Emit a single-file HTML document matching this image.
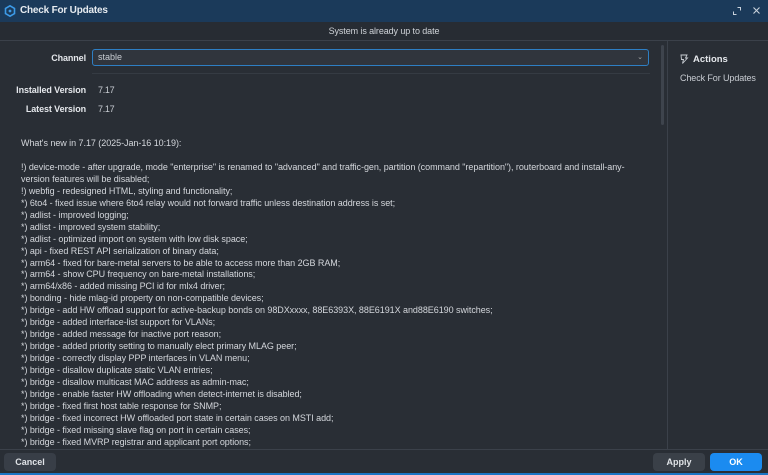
<!DOCTYPE html>
<html><head><meta charset="utf-8"><style>
*{margin:0;padding:0;box-sizing:border-box}
body{width:768px;height:475px;overflow:hidden;background:#292e35;font-family:"Liberation Sans",sans-serif;color:#d4d7dc;position:relative}
.title{position:absolute;left:0;top:0;width:768px;height:22px;background:#1b3a5a;}
.title .t{position:absolute;left:20px;top:5px;font-size:10px;font-weight:bold;color:#e6ebf0;letter-spacing:-0.2px}
.sub{position:absolute;left:0;top:22px;width:768px;height:19px;border-bottom:1px solid #3b414a;background:#272c33;text-align:center;font-size:9px;line-height:19px;color:#cfd3d8;letter-spacing:-0.1px}
.lbl{position:absolute;font-size:9px;font-weight:bold;color:#e4e7eb;text-align:right;width:86px;left:0;letter-spacing:-0.1px}
.val{position:absolute;left:98px;font-size:9px;color:#c8ccd2;letter-spacing:-0.3px}
.sel{position:absolute;left:92px;top:49px;width:557px;height:17px;border:1px solid #2e7fc4;border-radius:3px;background:#30353d;font-size:9px;line-height:15px;padding-left:5px;color:#c8ccd2}
.hr{position:absolute;left:92px;top:73px;width:558px;height:1px;background:#353b43}
.scroll{position:absolute;left:661px;top:45px;width:3px;height:80px;background:#3e444d;border-radius:2px}
.rp{position:absolute;left:667px;top:41px;width:1px;height:408px;background:#3b414a}
.notes{position:absolute;left:21px;top:138px;font-size:9px;line-height:11.96px;color:#d4d7dc;letter-spacing:-0.05px;white-space:nowrap}
.foot{position:absolute;left:0;top:449px;width:768px;height:26px;border-top:1px solid #3b414a;background:#292e35}
.btn{position:absolute;top:453px;height:18px;border-radius:4px;font-size:9px;font-weight:bold;text-align:center;line-height:18px}
.bl{position:absolute;left:0;top:473px;width:768px;height:2px;background:#1b75c4}
</style></head><body>
<div class="title">
<svg style="position:absolute;left:4px;top:5px" width="12" height="12" viewBox="0 0 12 12"><path d="M6 0.8 L10.5 3.4 L10.5 8.6 L6 11.2 L1.5 8.6 L1.5 3.4 Z" fill="none" stroke="#3d9be8" stroke-width="1.6"/><circle cx="6" cy="6" r="1.4" fill="#3d9be8"/></svg>
<div class="t">Check For Updates</div>
<svg style="position:absolute;left:733px;top:7px" width="8" height="8" viewBox="0 0 8 8"><path d="M4.5 0.5H7.5V3.5M3.5 7.5H0.5V4.5" fill="none" stroke="#c9d2dc" stroke-width="1"/></svg>
<svg style="position:absolute;left:753px;top:7px" width="7" height="7" viewBox="0 0 7 7"><path d="M0.5 0.5L6.5 6.5M6.5 0.5L0.5 6.5" stroke="#c9d2dc" stroke-width="1.1"/></svg>
</div>
<div class="sub">System is already up to date</div>
<div class="lbl" style="top:53px">Channel</div>
<div class="sel">stable<span style="position:absolute;right:5px;top:0;font-size:7px;color:#aaa">&#8964;</span></div>
<div class="hr"></div>
<div class="lbl" style="top:85px">Installed Version</div><div class="val" style="top:85px">7.17</div>
<div class="lbl" style="top:104px">Latest Version</div><div class="val" style="top:104px">7.17</div>
<div class="scroll"></div>
<div class="rp"></div>
<svg style="position:absolute;left:679px;top:54px" width="10" height="10" viewBox="0 0 10 10"><path d="M2 1H8L6.5 4H8.5L3.5 9.5L4.5 5.5H2.5Z" fill="none" stroke="#c9ced4" stroke-width="0.9"/></svg>
<div style="position:absolute;left:693px;top:54px;font-size:9.5px;font-weight:bold;color:#e4e7eb">Actions</div>
<div style="position:absolute;left:680px;top:73px;font-size:9px;color:#c8ccd2;letter-spacing:-0.1px">Check For Updates</div>
<div class="notes">What's new in 7.17 (2025-Jan-16 10:19):<br><br>
!) device-mode - after upgrade, mode "enterprise" is renamed to "advanced" and traffic-gen, partition (command "repartition"), routerboard and install-any-<br>
version features will be disabled;<br>
!) webfig - redesigned HTML, styling and functionality;<br>
*) 6to4 - fixed issue where 6to4 relay would not forward traffic unless destination address is set;<br>
*) adlist - improved logging;<br>
*) adlist - improved system stability;<br>
*) adlist - optimized import on system with low disk space;<br>
*) api - fixed REST API serialization of binary data;<br>
*) arm64 - fixed for bare-metal servers to be able to access more than 2GB RAM;<br>
*) arm64 - show CPU frequency on bare-metal installations;<br>
*) arm64/x86 - added missing PCI id for mlx4 driver;<br>
*) bonding - hide mlag-id property on non-compatible devices;<br>
*) bridge - add HW offload support for active-backup bonds on 98DXxxxx, 88E6393X, 88E6191X and88E6190 switches;<br>
*) bridge - added interface-list support for VLANs;<br>
*) bridge - added message for inactive port reason;<br>
*) bridge - added priority setting to manually elect primary MLAG peer;<br>
*) bridge - correctly display PPP interfaces in VLAN menu;<br>
*) bridge - disallow duplicate static VLAN entries;<br>
*) bridge - disallow multicast MAC address as admin-mac;<br>
*) bridge - enable faster HW offloading when detect-internet is disabled;<br>
*) bridge - fixed first host table response for SNMP;<br>
*) bridge - fixed incorrect HW offloaded port state in certain cases on MSTI add;<br>
*) bridge - fixed missing slave flag on port in certain cases;<br>
*) bridge - fixed MVRP registrar and applicant port options;</div>
<div class="foot"></div>
<div class="btn" style="left:4px;width:52px;background:#383e47;color:#e0e3e7">Cancel</div>
<div class="btn" style="left:653px;width:52px;background:#3a4048;color:#e0e3e7">Apply</div>
<div class="btn" style="left:710px;width:52px;background:#1b8bf0;color:#fff">OK</div>
<div class="bl"></div>
</body></html>
